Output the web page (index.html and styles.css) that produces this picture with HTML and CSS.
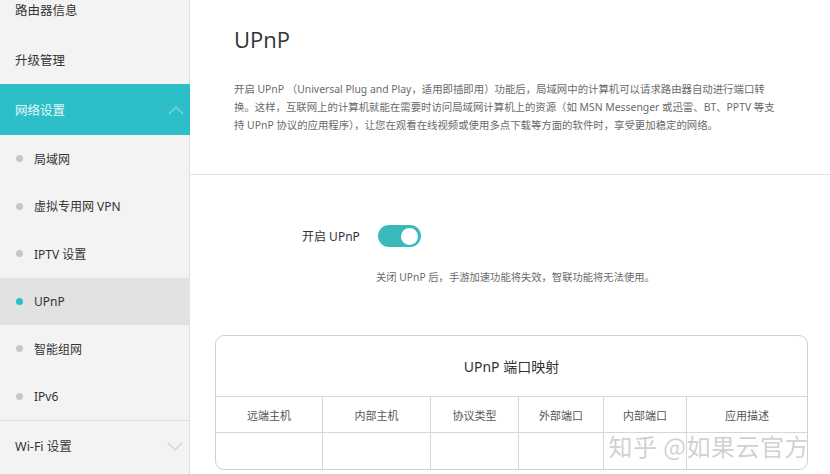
FILE: index.html
```html
<!DOCTYPE html>
<html lang="zh-CN">
<head>
<meta charset="utf-8">
<title>UPnP</title>
<link rel="stylesheet" href="styles.css">
</head>
<body>
<div class="page">
  <aside class="sidebar">
    <div class="nav-top">路由器信息</div>
    <div class="nav-top">升级管理</div>
    <div class="nav-top active">
      <span>网络设置</span>
      <svg class="chev" width="16" height="10" viewBox="0 0 16 10"><path d="M1 9 L8 2 L15 9" fill="none" stroke="#7fd8de" stroke-width="1.2"/></svg>
    </div>
    <div class="nav-sub"><i class="dot"></i>局域网</div>
    <div class="nav-sub"><i class="dot"></i>虚拟专用网 VPN</div>
    <div class="nav-sub"><i class="dot"></i>IPTV 设置</div>
    <div class="nav-sub selected"><i class="dot"></i>UPnP</div>
    <div class="nav-sub"><i class="dot"></i>智能组网</div>
    <div class="nav-sub"><i class="dot"></i>IPv6</div>
    <div class="nav-top wifi">
      <span>Wi-Fi 设置</span>
      <svg class="chev" width="16" height="10" viewBox="0 0 16 10"><path d="M1 2 L8 9 L15 2" fill="none" stroke="#cfcfcf" stroke-width="1.2"/></svg>
    </div>
  </aside>
  <main class="main">
    <section class="intro">
      <h1 class="title">UPnP</h1>
      <p class="desc">开启 UPnP （Universal Plug and Play，适用即插即用）功能后，局域网中的计算机可以请求路由器自动进行端口转<br>换。这样，互联网上的计算机就能在需要时访问局域网计算机上的资源（如 MSN Messenger 或迅雷、BT、PPTV 等支<br>持 UPnP 协议的应用程序），让您在观看在线视频或使用多点下载等方面的软件时，享受更加稳定的网络。</p>
    </section>
    <section class="settings">
      <div class="toggle-row">
        <span class="label">开启 UPnP</span>
        <span class="switch"><span class="knob"></span></span>
      </div>
      <p class="hint">关闭 UPnP 后，手游加速功能将失效，智联功能将无法使用。</p>
      <div class="card">
        <div class="card-title">UPnP 端口映射</div>
        <div class="grid">
          <div class="cell head">远端主机</div>
          <div class="cell head">内部主机</div>
          <div class="cell head">协议类型</div>
          <div class="cell head">外部端口</div>
          <div class="cell head">内部端口</div>
          <div class="cell head">应用描述</div>
          <div class="cell"></div>
          <div class="cell"></div>
          <div class="cell"></div>
          <div class="cell"></div>
          <div class="cell"></div>
          <div class="cell"></div>
        </div>
      </div>
      <div class="watermark">知乎 @如果云官方</div>
    </section>
  </main>
</div>
</body>
</html>
```
FILE: styles.css
```css
* { box-sizing: border-box; }
html, body { margin: 0; padding: 0; }
body {
  width: 830px;
  height: 474px;
  overflow: hidden;
  background: #fff;
  font-family: "Noto Sans", "Noto Sans CJK SC", sans-serif;
  color: #333;
}
.page {
  display: flex;
  height: 474px;
}
.sidebar {
  width: 190px;
  flex: none;
  background: #f3f3f3;
  border-right: 1px solid #e0e0e0;
  margin-top: -16px;
  height: 490px;
}
.nav-top {
  height: 50px;
  display: flex;
  align-items: center;
  justify-content: space-between;
  padding: 0 6px 0 15px;
  font-size: 12.5px;
  color: #333;
}
.nav-top.active {
  background: #2cbfc8;
  color: #e6f7f8;
  height: 51px;
  margin-right: -1px;
}
.nav-top.wifi {
  border-top: 1px solid #dedede;
}
.chev { display: block; }
.nav-sub {
  height: 47.5px;
  display: flex;
  align-items: center;
  padding-left: 16px;
  font-size: 12px;
  color: #333;
}
.nav-sub.selected {
  background: #e2e2e2;
}
.dot {
  width: 7px;
  height: 7px;
  border-radius: 50%;
  background: #c6c6c6;
  margin-right: 11px;
}
.nav-sub.selected .dot { background: #2cbfc8; }

.main {
  flex: 1;
  position: relative;
}
.intro {
  padding: 25px 0 0 44px;
  height: 175px;
  border-bottom: 1px solid #e4e4e4;
}
.title {
  margin: 0;
  font-family: "Open Sans", "Noto Sans CJK SC", sans-serif;
  font-weight: 400;
  font-size: 22px;
  line-height: 28px;
  color: #333;
}
.desc {
  margin: 27px 0 0 0;
  font-size: 10.4px;
  line-height: 18px;
  color: #6a6a6a;
  white-space: nowrap;
}
.settings {
  padding: 46px 23px 0 25px;
}
.toggle-row {
  display: flex;
  align-items: center;
  padding-left: 87px;
  height: 30px;
}
.label {
  font-size: 12px;
  color: #333;
  width: 76px;
}
.switch {
  width: 43px;
  height: 22px;
  border-radius: 11px;
  background: #3bb9ba;
  display: flex;
  align-items: center;
  justify-content: flex-end;
  padding-right: 3px;
}
.knob {
  width: 17px;
  height: 17px;
  border-radius: 50%;
  background: #fff;
}
.hint {
  margin: 17px 0 0 161px;
  font-size: 10.3px;
  line-height: 18px;
  color: #6a6a6a;
}
.card {
  margin-top: 49px;
  border: 1px solid #d0d0d0;
  border-radius: 9px;
  overflow: hidden;
  width: 593px;
}
.card-title {
  height: 61px;
  display: flex;
  align-items: center;
  justify-content: center;
  font-size: 14px;
  color: #333;
  border-bottom: 1px solid #d6d6d6;
}
.grid {
  display: grid;
  grid-template-columns: 107px 108px 88px 85px 83px 1fr;
  grid-auto-rows: 36px;
}
.cell {
  border-right: 1px solid #d6d6d6;
  border-bottom: 1px solid #d6d6d6;
  display: flex;
  align-items: center;
  justify-content: center;
  font-size: 11px;
  color: #555;
}
.cell:nth-child(6n) { border-right: none; }
.cell:nth-child(n+7) { border-bottom: none; }
.watermark {
  position: absolute;
  right: 22px;
  bottom: 13px;
  font-family: "Noto Sans CJK SC", sans-serif;
  font-size: 24px;
  line-height: 30px;
  color: rgba(150, 150, 150, 0.45);
  text-shadow: 0 0 1px rgba(255, 255, 255, 0.9);
  letter-spacing: 0.5px;
}
```
